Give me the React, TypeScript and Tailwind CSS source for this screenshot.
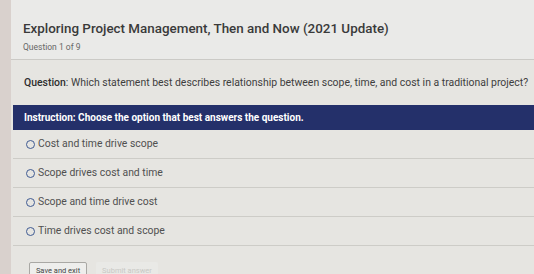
const options = [
  "Cost and time drive scope",
  "Scope drives cost and time",
  "Scope and time drive cost",
  "Time drives cost and scope",
];

export default function App() {
  return (
    <div
      className="flex h-[274px] w-[534px] overflow-hidden bg-[#d9d1cd]"
      style={{ fontFamily: "Roboto, 'Liberation Sans', sans-serif" }}
    >
      <div className="w-[11px] shrink-0" />
      <div className="flex min-w-0 flex-1 flex-col bg-[#e6e5e1]">
        <div className="h-[60px] shrink-0 border-b border-[#cbcac6] bg-[#eaeae8] px-[12px] pt-[19px]">
          <h1 className="whitespace-nowrap text-[13.4px] leading-[20px] font-medium text-[#3a3a3a]">
            Exploring Project Management, Then and Now (2021 Update)
          </h1>
          <p className="mt-[2px] text-[8.5px] leading-[12px] text-[#666]">Question 1 of 9</p>
        </div>
        <div className="flex h-[45px] shrink-0 items-center whitespace-nowrap pl-[13px] text-[10.45px] text-[#3e3e3e]">
          <span className="font-medium text-[#2e2e2e]">Question</span>: Which statement best describes
          relationship between scope, time, and cost in a traditional project?
        </div>
        <div className="ml-[2px] flex h-[25px] shrink-0 items-center bg-[#24306a] px-[11px] text-[10px] font-bold whitespace-nowrap text-white">
          Instruction: Choose the option that best answers the question.
        </div>
        <div className="ml-[2px]">
          {options.map((o) => (
            <div
              key={o}
              className="flex h-[29px] items-center gap-[3px] border-b border-[#cdccc7] pl-[13px] text-[10.4px] text-[#505050]"
            >
              <span className="h-[9px] w-[9px] rounded-full border-[1.5px] border-[#3f5a92]" />
              <span>{o}</span>
            </div>
          ))}
        </div>
        <div className="flex gap-[9px] pl-[18px] pt-[16px]">
          <button className="h-[18px] w-[58px] rounded-[2px] border border-[#a9a8a4] bg-[#eeeeec] text-[7.5px] text-[#444]">
            Save and exit
          </button>
          <button className="h-[18px] w-[62px] rounded-[2px] bg-[#e9e9e6] text-[7.5px] text-[#c8c8c4]">
            Submit answer
          </button>
        </div>
      </div>
    </div>
  );
}
